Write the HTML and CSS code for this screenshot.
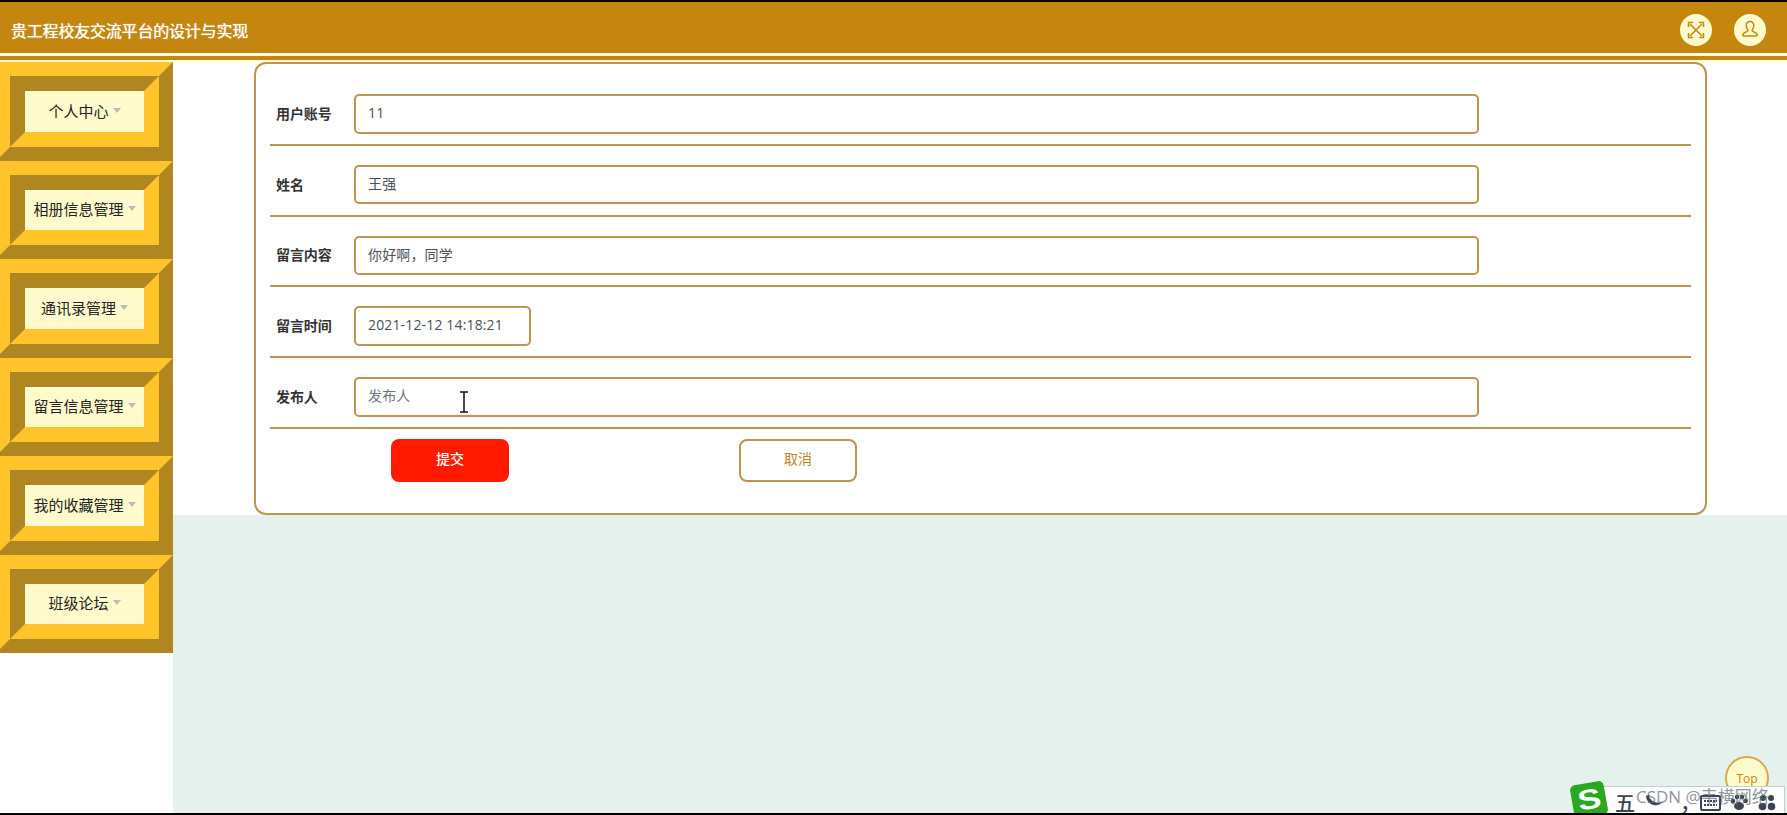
FILE: index.html
```html
<!DOCTYPE html>
<html lang="zh">
<head>
    <meta charset="UTF-8">
    <title>贵工程校友交流平台的设计与实现</title>
    <link rel="stylesheet" href="styles.css">
</head>
<body>
    <div class="header">
        <div class="header-bar">
            <div class="site-title">贵工程校友交流平台的设计与实现</div>
            <div class="header-icons">
                <span class="round-icon">
                    <svg width="18" height="18" viewBox="0 0 18 18" fill="none" stroke="#c4860e" stroke-width="1.500">
                        <path d="M3 3l12 12M15 3L3 15"/>
                        <path d="M1.500 6V1.500H6M12 1.500h4.500V6M16.500 12v4.500H12M6 16.500H1.500V12"/>
                    </svg>
                </span>
                <span class="round-icon">
                    <svg width="20" height="20" viewBox="0 0 20 20" fill="none" stroke="#c4860e" stroke-width="1.500">
                        <path d="M10 1.500c-2.600 0-3.800 1.700-3.800 4 0 1.900.7 3.300 1.700 4.200.2 1-.3 1.700-1.300 2.100-1.700.7-3.400 1.200-3.800 2.700-.2 1 .2 1.500 1 1.500h12.400c.8 0 1.200-.5 1-1.500-.4-1.500-2.100-2-3.800-2.700-1-.4-1.500-1.100-1.300-2.100 1-.9 1.700-2.300 1.700-4.200 0-2.300-1.200-4-3.800-4z"/>
                    </svg>
                </span>
            </div>
        </div>
    </div>

    <div class="layout">
        <div class="sidebar">
            <div class="menu-item"><div class="menu-inner"><div class="menu-label"><span class="menu-text">个人中心</span><i class="caret"></i></div></div></div>
            <div class="menu-item"><div class="menu-inner"><div class="menu-label"><span class="menu-text">相册信息管理</span><i class="caret"></i></div></div></div>
            <div class="menu-item"><div class="menu-inner"><div class="menu-label"><span class="menu-text">通讯录管理</span><i class="caret"></i></div></div></div>
            <div class="menu-item"><div class="menu-inner"><div class="menu-label"><span class="menu-text">留言信息管理</span><i class="caret"></i></div></div></div>
            <div class="menu-item"><div class="menu-inner"><div class="menu-label"><span class="menu-text">我的收藏管理</span><i class="caret"></i></div></div></div>
            <div class="menu-item"><div class="menu-inner"><div class="menu-label"><span class="menu-text">班级论坛</span><i class="caret"></i></div></div></div>
        </div>

        <div class="main">
            <div class="form-wrap">
                <form class="form-card">
                    <div class="form-row">
                        <label class="form-label">用户账号</label>
                        <input class="form-input" type="text" value="11">
                    </div>
                    <div class="form-row">
                        <label class="form-label">姓名</label>
                        <input class="form-input" type="text" value="王强">
                    </div>
                    <div class="form-row">
                        <label class="form-label">留言内容</label>
                        <input class="form-input" type="text" value="你好啊，同学">
                    </div>
                    <div class="form-row">
                        <label class="form-label">留言时间</label>
                        <input class="form-input date-input" type="text" value="2021-12-12 14:18:21">
                    </div>
                    <div class="form-row">
                        <label class="form-label">发布人</label>
                        <input class="form-input" type="text" placeholder="发布人">
                    </div>
                    <div class="form-actions">
                        <button type="button" class="btn btn-submit">提交</button>
                        <button type="button" class="btn btn-cancel">取消</button>
                    </div>
                </form>
            </div>
        </div>
    </div>

    <!-- text cursor left in the capture -->
    <svg class="text-cursor" width="10" height="22" viewBox="0 0 10 22" fill="none" stroke="#111" stroke-width="1.500">
        <path d="M1 1h8M5 1v20M1 21h8"/>
    </svg>

    <div class="top-btn">Top</div>

    <div class="ime-bar">
        <span class="ime-logo"><b class="ime-s">S</b></span>
        <span class="ime-key ime-wu">五</span>
        <svg class="ime-icon ime-moon" width="20" height="18" viewBox="0 0 20 18"><path fill="#3c4454" d="M1 3a9.500 9.500 0 0 0 18 4c-2 3-6 3.500-9.500 2S4 5 4 2C3 2 2 2 1 3z"/></svg>
        <span class="ime-key ime-comma">，</span>
        <svg class="ime-icon ime-keyboard" width="21" height="17" viewBox="0 0 21 17" fill="none" stroke="#3c4454" stroke-width="2"><rect x="1" y="2" width="19" height="14" rx="1"/><path d="M4 7h13M4 11h13" stroke-dasharray="2 1"/></svg>
        <svg class="ime-icon ime-paw" width="18" height="17" viewBox="0 0 18 17" fill="#3c4454"><circle cx="3" cy="7" r="2.300"/><circle cx="7" cy="3" r="2.300"/><circle cx="12" cy="3" r="2.300"/><circle cx="15.500" cy="7" r="2.300"/><ellipse cx="9" cy="12" rx="5" ry="4"/></svg>
        <svg class="ime-icon ime-clover" width="18" height="17" viewBox="0 0 18 17" fill="#3c4454"><circle cx="5" cy="4" r="3"/><circle cx="13" cy="4" r="3"/><circle cx="4.500" cy="12.500" r="3.800"/><circle cx="13.500" cy="12.500" r="3.800"/></svg>
    </div>
    <div class="watermark">CSDN @韦横网络</div>
</body>
</html>
```

FILE: styles.css
```css
html, body {
    margin: 0;
    height: 100%;
}
body {
    position: relative;
    display: flex;
    flex-direction: column;
    height: 815px;
    box-sizing: border-box;
    overflow: hidden;
    border-bottom: 2px solid #000;
    font-family: "Open Sans", "Noto Sans CJK SC", sans-serif;
    font-size: 14px;
    color: #333;
    background-color: #fff;
}

/* header */
.header {
    flex: none;
    background-color: #c4860e;
    border-top: 2px solid #000;
    border-bottom: 2px solid #fff8d0;
    padding-bottom: 4px;
}
.header-bar {
    display: flex;
    align-items: center;
    justify-content: space-between;
    height: 51px;
    border-bottom: 3px solid #fffbe0;
    padding: 0 21px 0 11px;
}
.site-title {
    margin-top: 4px;
    font-size: 16px;
    letter-spacing: -0.2px;
    color: #fff;
    text-shadow: 0 0 1px #fff;
}
.header-icons {
    display: flex;
    gap: 22px;
    margin-top: 5px;
}
.round-icon {
    display: flex;
    align-items: center;
    justify-content: center;
    width: 32px;
    height: 32px;
    border-radius: 50%;
    background-color: #fffbcc;
}

.layout {
    flex: 1;
    display: flex;
    min-height: 0;
}

/* sidebar */
.sidebar {
    flex: none;
    width: 173px;
}
.menu-item {
    box-sizing: border-box;
    width: 177px;
    height: 98.5px;
    margin-left: -4px;
    border: 14px solid;
    border-color: #ffc42a #b08620 #b08620 #ffc42a;
}
.menu-inner {
    box-sizing: border-box;
    height: 100%;
    border: 15px solid;
    border-color: #b08620 #ffc42a #ffc42a #b08620;
}
.menu-label {
    display: flex;
    align-items: center;
    justify-content: center;
    height: 100%;
    background-color: #fffbcc;
    font-size: 15px;
    color: #222;
}
.menu-text {
    margin-top: -2px;
}
.caret {
    width: 0;
    height: 0;
    margin: -2px 0 0 4px;
    border-top: 5px solid #bbb;
    border-left: 4px solid transparent;
    border-right: 4px solid transparent;
}

/* main */
.main {
    flex: 1;
    display: flex;
    flex-direction: column;
    background-color: #e4f1ec;
}
.form-wrap {
    background-color: #fff;
    padding: 0 80px 0 81px;
}
.form-card {
    box-sizing: border-box;
    height: 453px;
    padding: 11px 14px 0;
    border: 2px solid #bb9650;
    border-radius: 12px;
    background-color: #fff;
}
.form-row {
    display: flex;
    align-items: center;
    padding: 19px 0 10.3px;
    border-bottom: 2px solid #bb9650;
}
.form-label {
    flex: none;
    width: 78px;
    margin-top: -2px;
    padding-left: 6px;
    font-weight: 700;
    letter-spacing: -0.1px;
}
.form-input {
    box-sizing: border-box;
    width: 1125px;
    height: 39.5px;
    padding: 0 12px 3px;
    border: 2px solid #bb9650;
    border-radius: 5px;
    outline: none;
    font-family: inherit;
    font-size: 14px;
    letter-spacing: 0.15px;
    color: #495057;
    background-color: #fff;
}
.form-input::placeholder {
    color: #6c757d;
}
.date-input {
    width: 177px;
}
.form-actions {
    display: flex;
    gap: 230px;
    padding: 10px 0 0 121px;
}
.btn {
    box-sizing: border-box;
    width: 118px;
    height: 43px;
    padding: 0 0 4px;
    border-radius: 8px;
    font-family: inherit;
    font-size: 14px;
}
.btn-submit {
    border: none;
    color: #fff;
    background-color: #ff1a00;
    font-weight: 500;
}
.btn-cancel {
    border: 2px solid #bb9650;
    color: #bd8426;
    background-color: #fff;
}

/* things lying over the page */
.text-cursor {
    position: absolute;
    left: 459px;
    top: 391px;
}
.top-btn {
    position: absolute;
    left: 1725px;
    top: 756px;
    box-sizing: border-box;
    width: 44px;
    height: 44px;
    padding-top: 13px;
    border: 2px solid #d8ab4a;
    border-radius: 50%;
    background-color: #fffbcc;
    font-size: 12px;
    line-height: 16px;
    text-align: center;
    color: #c4860e;
}
.ime-bar {
    position: absolute;
    left: 1602px;
    top: 786px;
    display: flex;
    align-items: center;
    box-sizing: border-box;
    width: 183px;
    height: 27px;
    padding-top: 4px;
    border: 1px solid #c0d0d4;
    border-bottom: none;
    background-color: #fff;
}
.ime-logo {
    position: absolute;
    left: -31px;
    top: -4px;
    display: flex;
    align-items: center;
    justify-content: center;
    width: 34px;
    height: 34px;
    border-radius: 5px;
    background-color: #2aa81f;
    transform: rotate(-10deg);
    overflow: hidden;
}
.ime-s {
    font-family: "Liberation Sans", sans-serif;
    font-size: 28px;
    line-height: 30px;
    color: #fff;
    transform: scaleX(1.25);
}
.ime-key {
    color: #3c4454;
    font-size: 20px;
    font-weight: 500;
}
.ime-wu {
    margin-left: 12px;
}
.ime-comma {
    width: 20px;
    margin-left: 15px;
}
.ime-icon {
    flex: none;
}
.ime-moon {
    margin-left: 10px;
}
.ime-paw {
    margin-left: 9px;
}
.ime-clover {
    margin-left: 10px;
}
.watermark {
    position: absolute;
    left: 1636px;
    top: 786px;
    font-size: 17px;
    line-height: 22px;
    color: rgba(90, 100, 110, 0.7);
}
```
